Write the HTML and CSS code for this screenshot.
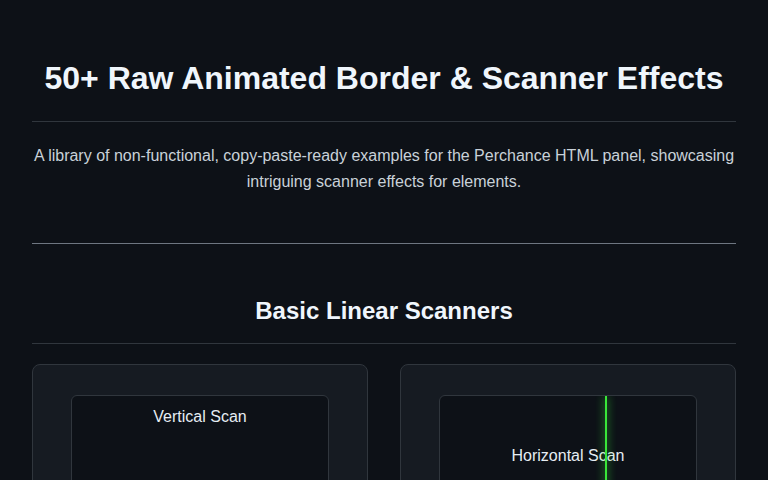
FILE: index.html
```html
<!DOCTYPE html>
<html lang="en">
<head>
    <meta charset="UTF-8">
    <meta name="viewport" content="width=device-width, initial-scale=1.0">
    <title>50+ Raw Animated Border &amp; Scanner Effects</title>
    <link rel="stylesheet" href="styles.css">
</head>
<body>
    <div class="container">
        <header class="cabecalho">
            <h1>50+ Raw Animated Border &amp; Scanner Effects</h1>
            <p class="intro">A library of non-functional, copy-paste-ready examples for the Perchance HTML panel, showcasing intriguing scanner effects for elements.</p>
        </header>

        <hr class="divisor">

        <!-- Basic Linear Scanners -->
        <section class="secao">
            <h2>Basic Linear Scanners</h2>
            <div class="grade">
                <div class="cartao">
                    <div class="efeito efeito-vertical">
                        <span class="rotulo">Vertical Scan</span>
                    </div>
                </div>
                <div class="cartao">
                    <div class="efeito efeito-horizontal">
                        <span class="linha-scan"></span>
                        <span class="rotulo">Horizontal Scan</span>
                    </div>
                </div>
            </div>
        </section>
    </div>
</body>
</html>
```

FILE: styles.css
```css
body {
    font-family: "Liberation Sans", Arial, sans-serif;
    margin: 0;
    padding: 0 32px;
    background-color: #0d1117; /* fundo escuro */
    color: #c9d1d9;
}
.container {
    max-width: 704px;
    margin: 0 auto;
    padding-top: 60px;
}
.cabecalho h1 {
    margin: 0;
    padding-bottom: 24px;
    border-bottom: 1px solid #30363d;
    text-align: center;
    font-size: 32px;
    line-height: 37px;
    color: #f0f6fc;
}
.intro {
    margin: 21px 0 0;
    text-align: center;
    font-size: 16px;
    line-height: 26px;
}
.divisor {
    margin: 48px 0 0;
    border: none;
    border-top: 1px solid #6e7681;
}
.secao h2 {
    margin: 53px 0 0;
    padding-bottom: 18px;
    border-bottom: 1px solid #30363d;
    text-align: center;
    font-size: 24px;
    line-height: 28px;
    color: #f0f6fc;
}
.grade {
    display: grid;
    grid-template-columns: 1fr 1fr;
    gap: 32px;
    margin-top: 20px;
}
.cartao {
    background-color: #161b22;
    border: 1px solid #30363d;
    border-radius: 8px;
    padding: 30px 0;
    display: flex;
    justify-content: center;
}
.efeito {
    position: relative; /* para a linha do scanner */
    width: 256px;
    height: 120px;
    background-color: #0d1117;
    border: 1px solid #30363d;
    border-radius: 6px;
    overflow: hidden;
    display: flex;
    justify-content: center;
    color: #e6edf3;
}
.efeito-vertical {
    align-items: flex-start;
}
.efeito-vertical .rotulo {
    margin-top: 11px;
}
.efeito-horizontal {
    align-items: center;
}
.rotulo {
    font-size: 16px;
    line-height: 20px;
}
.linha-scan {
    position: absolute;
    top: 0;
    bottom: 0;
    left: 165px;
    width: 2px;
    background-color: #39e639;
    box-shadow: 0 0 8px #39e639;
}
```
